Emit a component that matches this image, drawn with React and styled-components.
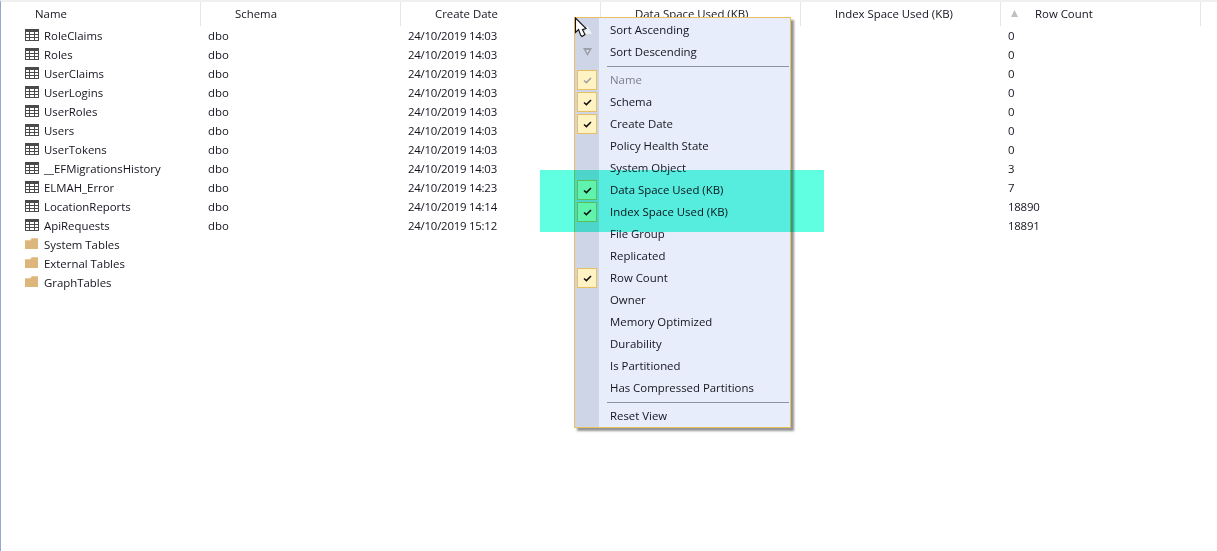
import React from "react";
import styled, { createGlobalStyle } from "styled-components";

const Global = createGlobalStyle`
  html, body { margin: 0; padding: 0; background: #fff; }
  body { font-family: "Open Sans", "Noto Sans", "Liberation Sans", sans-serif; font-size: 11.4px; color: #14141f; }
`;

const Page = styled.div`
  position: relative;
  width: 1217px;
  height: 551px;
  box-sizing: border-box;
  overflow: hidden;
  background: #fff;
  border-left: 1px solid #9ba6d0;
  border-top: 2px solid #f0f0f0;
`;

const Row = styled.div`
  display: grid;
  grid-template-columns: repeat(6, 200px);
  height: ${p => p.$h}px;
  line-height: ${p => p.$h}px;
`;

const HeaderCell = styled.div`
  position: relative;
  box-sizing: border-box;
  height: 24px;
  padding-left: 34px;
  border-right: 1px solid #e6e6e6;
  white-space: nowrap;
`;

const Cell = styled.div`
  display: flex;
  align-items: center;
  gap: 5px;
  padding-left: ${p => p.$first ? 24 : 7}px;
  white-space: nowrap;
`;

const DateText = styled.span`
  letter-spacing: -0.22px;
`;

const SortMark = styled.svg`
  position: absolute;
  left: 10px;
  top: 8px;
`;

const Menu = styled.div`
  position: absolute;
  left: 573px;
  top: 15px;
  width: 217px;
  height: 411px;
  box-sizing: border-box;
  border: 1px solid #e9c05f;
  padding-top: 1px;
  background: linear-gradient(to right, #cdd5e6 24px, #e8edfb 24px);
  box-shadow: 3px 3px 2px rgba(60, 60, 60, 0.55);
`;

const MenuItem = styled.div`
  display: flex;
  align-items: center;
  height: 22px;
  color: ${p => p.$muted ? "#7b7f8a" : "#14141f"};
`;

const MenuLabel = styled.span`
  margin-top: -2px;
  white-space: nowrap;
`;

const Gutter = styled.div`
  display: flex;
  align-items: center;
  justify-content: center;
  width: 24px;
  height: 22px;
  margin-right: 11px;
  flex: none;
`;

const CheckBox = styled.div`
  display: flex;
  align-items: center;
  justify-content: center;
  width: 20px;
  height: 20px;
  box-sizing: border-box;
  border: 1px solid #e9c05f;
  background: #fff3c4;
`;

const Separator = styled.div`
  height: 1px;
  margin: 3px 1px 2px 32px;
  background: #8d93a4;
`;

const Highlight = styled.div`
  position: absolute;
  left: 539px;
  top: 168px;
  width: 284px;
  height: 62px;
  background: #60ffe2;
  mix-blend-mode: multiply;
`;

const Cursor = styled.svg`
  position: absolute;
  left: 573px;
  top: 15px;
`;

const TableSvg = styled.svg`
  flex: none;
  margin-bottom: 1px;
`;

const FolderSvg = styled.svg`
  flex: none;
  margin-right: 1px;
  margin-bottom: 2px;
`;

const TableIcon = () => (
  <TableSvg width="14" height="12" viewBox="0 0 14 12">
    <rect x="0.5" y="0.5" width="13" height="11" fill="#fff" stroke="#4a4a4a" />
    <rect x="0" y="0" width="14" height="3" fill="#4a4a4a" />
    <path d="M0 5.5H14M0 8.5H14M4.5 3V12M9.5 3V12" stroke="#4a4a4a" strokeWidth="1" />
  </TableSvg>
);

const FolderIcon = () => (
  <FolderSvg width="13" height="11" viewBox="0 0 13 11">
    <path d="M0 2H5L7 0H13V11H0Z" fill="#dcb67a" />
    <path d="M0 2.5H5.5L7.5 .5H13" stroke="#e6cb9f" strokeWidth="1" fill="none" />
  </FolderSvg>
);

const Check = ({ color = "#111" }) => (
  <svg width="9" height="7" viewBox="0 0 9 7">
    <path d="M1 3.5L3.4 5.6L8 1" fill="none" stroke={color} strokeWidth="1.5" />
  </svg>
);

const columns = ["Name", "Schema", "Create Date", "Data Space Used (KB)", "Index Space Used (KB)", "Row Count"];

const tables = [
  ["RoleClaims", "24/10/2019 14:03", "0"],
  ["Roles", "24/10/2019 14:03", "0"],
  ["UserClaims", "24/10/2019 14:03", "0"],
  ["UserLogins", "24/10/2019 14:03", "0"],
  ["UserRoles", "24/10/2019 14:03", "0"],
  ["Users", "24/10/2019 14:03", "0"],
  ["UserTokens", "24/10/2019 14:03", "0"],
  ["__EFMigrationsHistory", "24/10/2019 14:03", "3"],
  ["ELMAH_Error", "24/10/2019 14:23", "7"],
  ["LocationReports", "24/10/2019 14:14", "18890"],
  ["ApiRequests", "24/10/2019 15:12", "18891"],
];

const folders = ["System Tables", "External Tables", "GraphTables"];

const items = [
  ["Name", "muted"],
  ["Schema", "on"],
  ["Create Date", "on"],
  ["Policy Health State"],
  ["System Object"],
  ["Data Space Used (KB)", "on"],
  ["Index Space Used (KB)", "on"],
  ["File Group"],
  ["Replicated"],
  ["Row Count", "on"],
  ["Owner"],
  ["Memory Optimized"],
  ["Durability"],
  ["Is Partitioned"],
  ["Has Compressed Partitions"],
];

export default function App() {
  return (
    <Page>
      <Global />
      <Row $h={24}>
        {columns.map((c, i) => (
          <HeaderCell key={c}>
            {c}
            {i === 5 && (
              <SortMark width="7" height="7" viewBox="0 0 7 7">
                <path d="M3.5 0L7 7H0Z" fill="#c0c0c0" />
              </SortMark>
            )}
          </HeaderCell>
        ))}
      </Row>
      {tables.map(([name, date, count]) => (
        <Row $h={19} key={name}>
          <Cell $first><TableIcon />{name}</Cell>
          <Cell>dbo</Cell>
          <Cell><DateText>{date}</DateText></Cell>
          <Cell />
          <Cell />
          <Cell><DateText>{count}</DateText></Cell>
        </Row>
      ))}
      {folders.map(name => (
        <Row $h={19} key={name}>
          <Cell $first><FolderIcon />{name}</Cell>
        </Row>
      ))}
      <Menu>
        <MenuItem>
          <Gutter>
            <svg width="9" height="8" viewBox="0 0 9 8"><path d="M4.5 0L9 8H0Z" fill="#eef0f6" /></svg>
          </Gutter>
          <MenuLabel>Sort Ascending</MenuLabel>
        </MenuItem>
        <MenuItem>
          <Gutter>
            <svg width="9" height="8" viewBox="0 0 9 8"><path d="M0 0H9L4.5 8Z" fill="#9b9fa9" /><path d="M3 2H6L4.5 5Z" fill="#dfe2ea" /></svg>
          </Gutter>
          <MenuLabel>Sort Descending</MenuLabel>
        </MenuItem>
        <Separator />
        {items.map(([label, state]) => (
          <MenuItem key={label} $muted={state === "muted"}>
            <Gutter>
              {state && <CheckBox><Check color={state === "muted" ? "#a0a0a0" : "#111"} /></CheckBox>}
            </Gutter>
            <MenuLabel>{label}</MenuLabel>
          </MenuItem>
        ))}
        <Separator />
        <MenuItem>
          <Gutter />
          <MenuLabel>Reset View</MenuLabel>
        </MenuItem>
      </Menu>
      <Highlight />
      <Cursor width="14" height="21" viewBox="0 0 14 21">
        <path d="M1.5 1V15.5L4.6 12.6L6.5 18L8 19.5L11 17.5L8.4 12.6L12 11.5Z" fill="#fff" stroke="#111" strokeWidth="1.1" />
      </Cursor>
    </Page>
  );
}
